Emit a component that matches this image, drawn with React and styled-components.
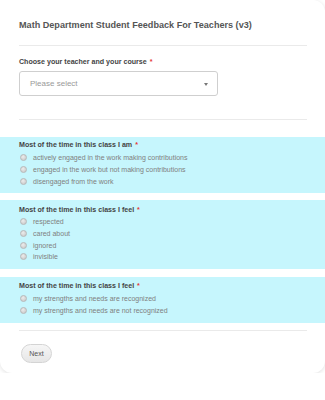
import React from "react";
import styled, { createGlobalStyle } from "styled-components";

const Global = createGlobalStyle`
  html, body { margin: 0; padding: 0; background: #fff; }
  body { font-family: "Liberation Sans", Arial, sans-serif; }
  * { box-sizing: border-box; }
`;

const Card = styled.div`
  width: 325px;
  height: 373px;
  background: #fff;
  border-radius: 0 12px 12px 12px;
  box-shadow: 0 1px 4px rgba(0, 0, 0, 0.12);
  display: flex;
  flex-direction: column;
  overflow: hidden;
`;

const Header = styled.div`
  padding: 19px 18px 0 19px;
`;

const Title = styled.h1`
  margin: 0;
  font-size: 9.1px;
  font-weight: bold;
  color: #555;
  line-height: 13px;
  height: 26px;
`;

const Divider = styled.div`
  margin: ${(p) => p.$mt || "0"} 18px 0 19px;
  height: 1px;
  background: #eaeaea;
`;

const Block = styled.div`
  padding: ${(p) => p.$pad || "0 19px"};
`;

const Label = styled.div`
  font-size: 7.1px;
  font-weight: bold;
  color: #444;
  line-height: 10px;
  margin-bottom: ${(p) => p.$mb || "4px"};
`;

const Star = styled.span`
  color: #e53935;
  margin-left: 3px;
`;

const Select = styled.div`
  width: 199px;
  height: 25px;
  border: 1px solid #cfcfcf;
  border-radius: 3px;
  display: flex;
  align-items: center;
  justify-content: space-between;
  padding: 0 9px 0 10px;
  font-size: 8px;
  color: #999;
`;

const Caret = styled.span`
  width: 0;
  height: 0;
  border-left: 2.5px solid transparent;
  border-right: 2.5px solid transparent;
  border-top: 3px solid #777;
  margin-top: 2px;
`;

const Section = styled.div`
  background: #c6f6fd;
  padding: ${(p) => p.$pad};
  margin-top: ${(p) => p.$mt};
`;

const QLabel = styled(Label)`
  padding-left: 19px;
`;

const Option = styled.div`
  display: flex;
  align-items: center;
  height: ${(p) => p.$h};
  padding-left: 20px;
  font-size: 7px;
  color: #808080;
`;

const Radio = styled.span`
  width: 7px;
  height: 7px;
  border-radius: 50%;
  background: radial-gradient(circle at 40% 35%, #ececec, #c4c4c4);
  border: 0.5px solid #b8b8b8;
  margin-right: 6px;
  flex-shrink: 0;
`;

const Footer = styled.div`
  padding: 11px 0 0 21px;
`;

const Button = styled.button`
  width: 31px;
  height: 19px;
  border-radius: 10px;
  border: 1px solid #d4d4d4;
  background: linear-gradient(#f6f6f6, #e6e6e6);
  font-family: inherit;
  font-size: 7px;
  color: #555;
  padding: 0;
`;

const questions = [
  {
    label: "Most of the time in this class I am",
    pad: "3px 0 6px",
    mt: "17px",
    gap: "1px",
    h: "12px",
    options: [
      "actively engaged in the work making contributions",
      "engaged in the work but not making contributions",
      "disengaged from the work",
    ],
  },
  {
    label: "Most of the time in this class I feel",
    pad: "5px 0 6px",
    mt: "7px",
    gap: "1px",
    h: "11.67px",
    options: ["respected", "cared about", "ignored", "invisible"],
  },
  {
    label: "Most of the time in this class I feel",
    pad: "4px 0 6px",
    mt: "8px",
    gap: "2px",
    h: "12px",
    options: [
      "my strengths and needs are recognized",
      "my strengths and needs are not recognized",
    ],
  },
];

export default function App() {
  return (
    <>
      <Global />
      <Card>
        <Header>
          <Title>Math Department Student Feedback For Teachers (v3)</Title>
        </Header>
        <Divider />
        <Block $pad="11px 19px 23px">
          <Label $mb="4px">
            Choose your teacher and your course<Star>*</Star>
          </Label>
          <Select>
            Please select
            <Caret />
          </Select>
        </Block>
        <Divider />
        {questions.map((q, i) => (
          <Section key={i} $pad={q.pad} $mt={q.mt}>
            <QLabel $mb={q.gap}>
              {q.label}
              <Star>*</Star>
            </QLabel>
            {q.options.map((o) => (
              <Option key={o} $h={q.h}>
                <Radio />
                {o}
              </Option>
            ))}
          </Section>
        ))}
        <Divider $mt="7px" />
        <Footer>
          <Button>Next</Button>
        </Footer>
      </Card>
    </>
  );
}
